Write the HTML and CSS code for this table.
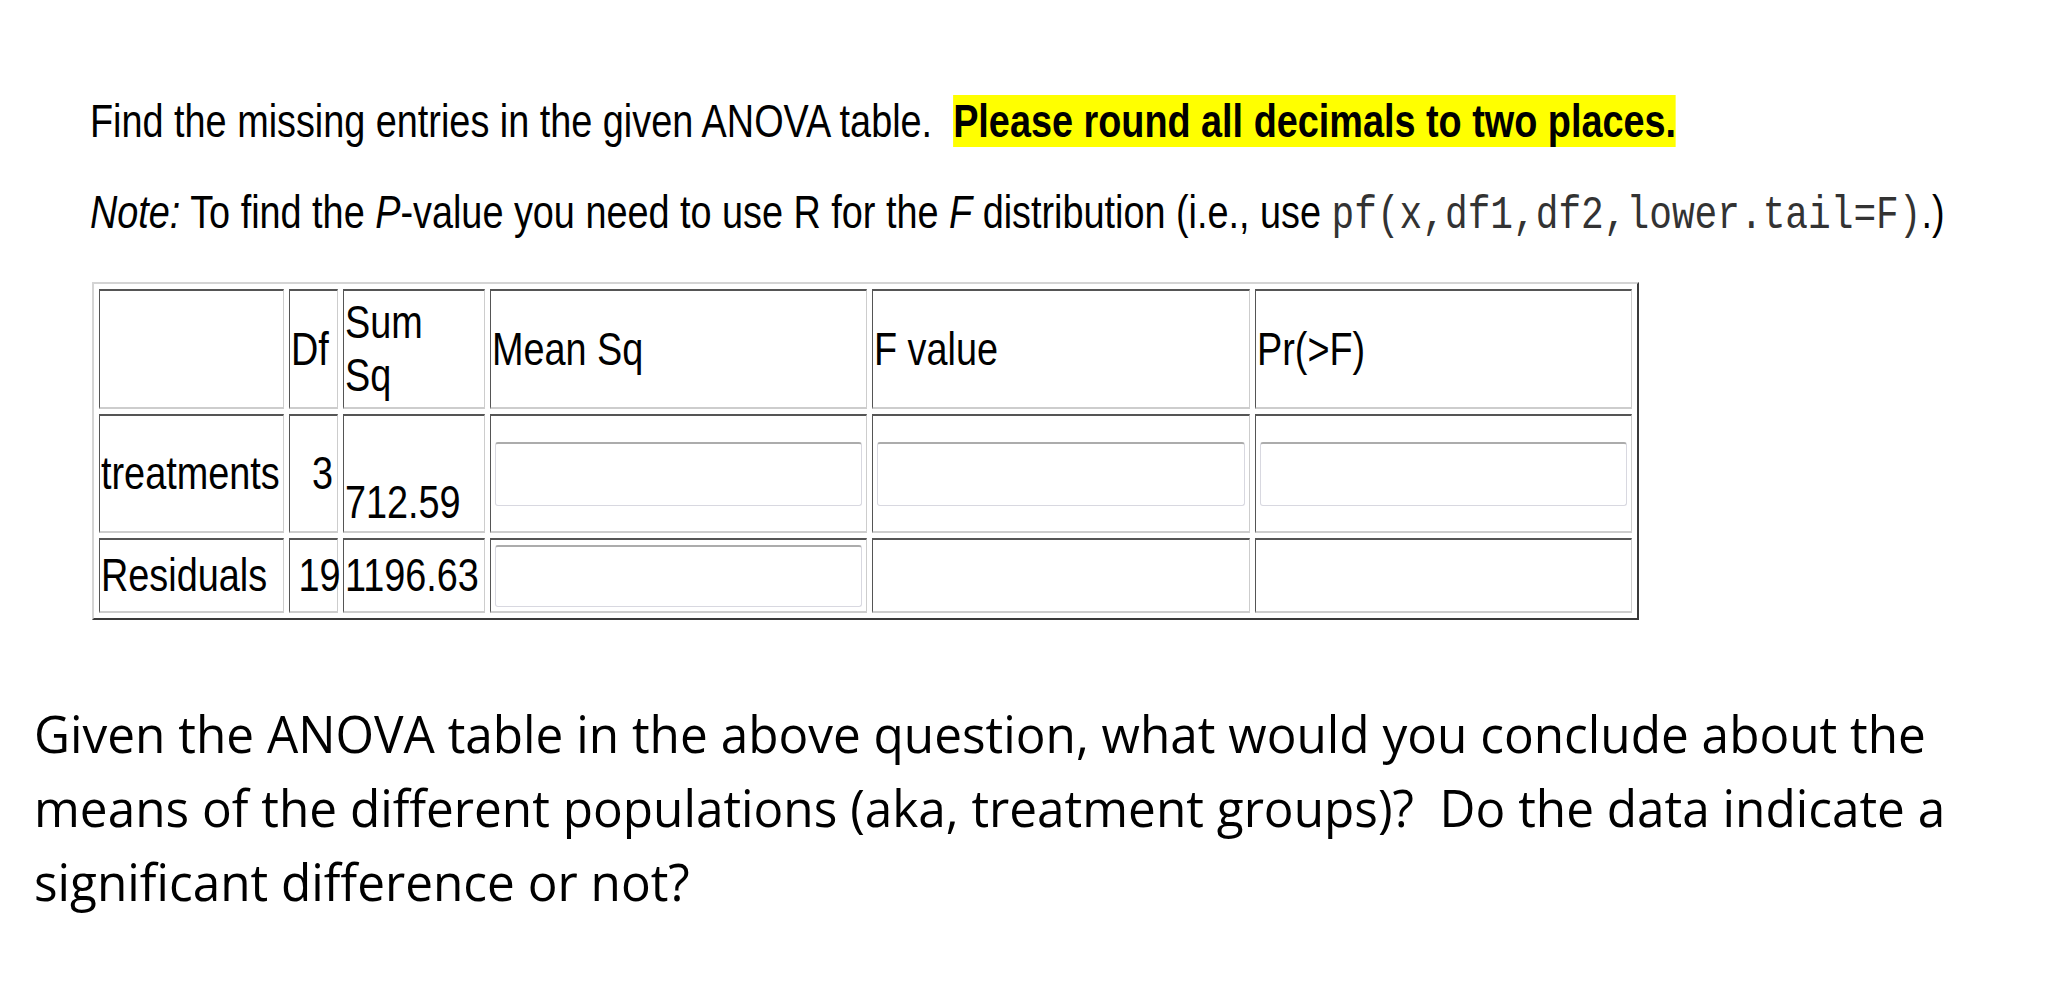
FILE: index.html
```html
<!DOCTYPE html>
<html lang="en">
<head>
<meta charset="utf-8">
<title>ANOVA question</title>
<link rel="stylesheet" href="styles.css">
</head>
<body>
<main class="page">
  <section class="question">
    <p class="line line-1">Find the missing entries in the given ANOVA table.&nbsp; <mark class="hl">Please round all decimals to two places.</mark></p>
    <p class="line line-2"><em>Note:</em> To find the <em>P</em>-value you need to use R for the <em>F</em> distribution (i.e., use <code class="code">pf(x,df1,df2,lower.tail=F)</code>.)</p>
    <table class="anova">
      <colgroup>
        <col class="c-name">
        <col class="c-df">
        <col class="c-ss">
        <col class="c-wide">
        <col class="c-wide2">
        <col class="c-wide">
      </colgroup>
      <tr class="r-head">
        <td></td>
        <td><div class="tx">Df</div></td>
        <td><div class="tx">Sum<br>Sq</div></td>
        <td><div class="tx">Mean Sq</div></td>
        <td><div class="tx">F value</div></td>
        <td><div class="tx">Pr(&gt;F)</div></td>
      </tr>
      <tr class="r-treat">
        <td><div class="tx">treatments</div></td>
        <td class="num-cell"><div class="tx num">3</div></td>
        <td class="bottom-cell"><div class="tx">712.59</div></td>
        <td class="in-cell"><input class="box" type="text" aria-label="Mean Sq treatments"></td>
        <td class="in-cell"><input class="box" type="text" aria-label="F value"></td>
        <td class="in-cell"><input class="box" type="text" aria-label="Pr(&gt;F)"></td>
      </tr>
      <tr class="r-resid">
        <td><div class="tx">Residuals</div></td>
        <td class="num-cell"><div class="tx num">19</div></td>
        <td><div class="tx">1196.63</div></td>
        <td class="in-cell"><input class="box box-short" type="text" aria-label="Mean Sq residuals"></td>
        <td></td>
        <td></td>
      </tr>
    </table>
  </section>
  <p class="answer">Given the ANOVA table in the above question, what would you conclude about the<br>means of the different populations (aka, treatment groups)?&nbsp; Do the data indicate a<br>significant difference or not?</p>
</main>
</body>
</html>
```

FILE: styles.css
```css
* {
  box-sizing: border-box;
}

html, body {
  margin: 0;
  background: #ffffff;
  color: #000000;
  font-family: "Liberation Sans", Arial, sans-serif;
}

.page {
  width: 2046px;
}

.question {
  padding: 95px 0 0 90px;
}

.line {
  margin: 0;
  height: 53px;
  font-size: 46px;
  line-height: 53px;
  white-space: nowrap;
  transform: scaleX(0.822);
  transform-origin: 0 0;
}

.line-2 {
  margin-top: 38px;
}

.hl {
  background: #ffff00;
  color: #000000;
  font-weight: bold;
}

.code {
  font-family: "Liberation Mono", "Courier New", monospace;
  font-size: 46px;
  line-height: 1;
  color: #333333;
}

.anova {
  margin: 43px 0 0 2px;
  width: 1547px;
  table-layout: fixed;
  border-collapse: separate;
  border-spacing: 5px;
  border-style: solid;
  border-width: 2px;
  border-color: #d4d4d4 #3a3a3a #3a3a3a #d4d4d4;
}

.c-name { width: 185px; }
.c-df { width: 49px; }
.c-ss { width: 142px; }
.c-wide { width: 377px; }
.c-wide2 { width: 378px; }

.anova td {
  padding: 0 1px;
  border-style: solid;
  border-width: 2px 1px 2px 1px;
  border-color: #555555 #cdcdcd #cdcdcd #555555;
  vertical-align: middle;
  font-size: 46px;
}

.r-head { height: 120px; }
.r-treat { height: 119px; }
.r-resid { height: 75px; }

.tx {
  line-height: 53px;
  white-space: nowrap;
  transform: scaleX(0.822);
  transform-origin: 0 50%;
}

.anova td.num-cell {
  padding-right: 4px;
}

.num {
  text-align: right;
  transform-origin: 100% 50%;
}

.anova td.bottom-cell {
  vertical-align: bottom;
  padding-bottom: 2px;
}

.anova td.in-cell {
  padding: 0 4px;
}

.box {
  display: block;
  width: 100%;
  height: 64px;
  margin: 0;
  padding: 0;
  background: #ffffff;
  border: 1px solid #d8d8e0;
  border-top: 2px solid #acacac;
  border-radius: 3px;
  font: inherit;
}

.box-short {
  height: 62px;
}

.answer {
  margin: 76px 0 0 34px;
  font-family: "Open Sans", "Noto Sans", sans-serif;
  font-size: 52px;
  font-weight: 500;
  line-height: 74px;
  white-space: nowrap;
  transform: scaleX(0.952);
  transform-origin: 0 0;
}
```
